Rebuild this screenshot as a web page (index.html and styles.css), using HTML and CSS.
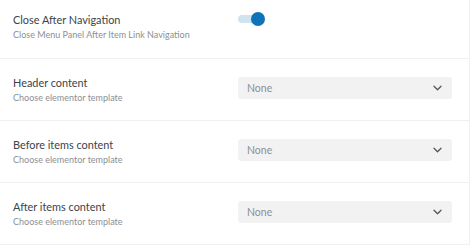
FILE: index.html
```html
<!DOCTYPE html>
<html>
<head>
<meta charset="utf-8">
<link rel="stylesheet" href="styles.css">
</head>
<body>
<div class="panel">
  <div class="row">
    <div class="label">
      <div class="title">Close After Navigation</div>
      <div class="desc">Close Menu Panel After Item Link Navigation</div>
    </div>
    <div class="control toggle-wrap">
      <span class="toggle"><span class="knob"></span></span>
    </div>
  </div>
  <div class="row">
    <div class="label">
      <div class="title">Header content</div>
      <div class="desc">Choose elementor template</div>
    </div>
    <div class="control">
      <div class="select"><span>None</span>
        <svg class="chev" width="9" height="6" viewBox="0 0 9 6"><path d="M1 1.2l3.5 3.5 3.5-3.5" fill="none" stroke="#50575e" stroke-width="1.3" stroke-linecap="round" stroke-linejoin="round"/></svg>
      </div>
    </div>
  </div>
  <div class="row">
    <div class="label">
      <div class="title">Before items content</div>
      <div class="desc">Choose elementor template</div>
    </div>
    <div class="control">
      <div class="select"><span>None</span>
        <svg class="chev" width="9" height="6" viewBox="0 0 9 6"><path d="M1 1.2l3.5 3.5 3.5-3.5" fill="none" stroke="#50575e" stroke-width="1.3" stroke-linecap="round" stroke-linejoin="round"/></svg>
      </div>
    </div>
  </div>
  <div class="row">
    <div class="label">
      <div class="title">After items content</div>
      <div class="desc">Choose elementor template</div>
    </div>
    <div class="control">
      <div class="select"><span>None</span>
        <svg class="chev" width="9" height="6" viewBox="0 0 9 6"><path d="M1 1.2l3.5 3.5 3.5-3.5" fill="none" stroke="#50575e" stroke-width="1.3" stroke-linecap="round" stroke-linejoin="round"/></svg>
      </div>
    </div>
  </div>
</div>
</body>
</html>
```
FILE: styles.css
```css
html, body {
  margin: 0;
  padding: 0;
  background: #ffffff;
}
body {
  font-family: Lato, "Open Sans", sans-serif;
}
.panel {
  width: 469px;
  border-right: 1px solid #f0f0f1;
}
.row {
  display: flex;
  align-items: center;
  height: 61px;
  border-bottom: 1px solid #f0f0f1;
  padding-left: 13px;
  box-sizing: content-box;
}
.row:first-child {
  height: 58px;
  align-items: flex-start;
}
.row:first-child .label {
  padding-top: 12px;
}
.label {
  width: 225px;
}
.title {
  font-size: 10.9px;
  color: #3c434a;
  line-height: 15px;
}
.desc {
  font-size: 9px;
  color: #8c8f94;
  line-height: 13px;
  margin-top: 1px;
}
.control {
  flex: 0 0 auto;
  margin-bottom: 4px;
}
.toggle-wrap {
  padding-top: 12px;
  margin-bottom: 0;
}
.toggle {
  display: block;
  position: relative;
  width: 25px;
  height: 8px;
  margin-top: 3px;
  border-radius: 4px;
  background: #cfe3f1;
}
.knob {
  position: absolute;
  right: -2px;
  top: -3px;
  width: 14px;
  height: 14px;
  border-radius: 50%;
  background: #0e73b8;
}
.select {
  width: 214px;
  height: 22px;
  box-sizing: border-box;
  background: #f2f2f3;
  border-radius: 3px;
  display: flex;
  align-items: center;
  justify-content: space-between;
  padding: 0 10px 0 9px;
  font-size: 10.5px;
  color: #8c8f94;
}
.chev {
  display: block;
}
```
